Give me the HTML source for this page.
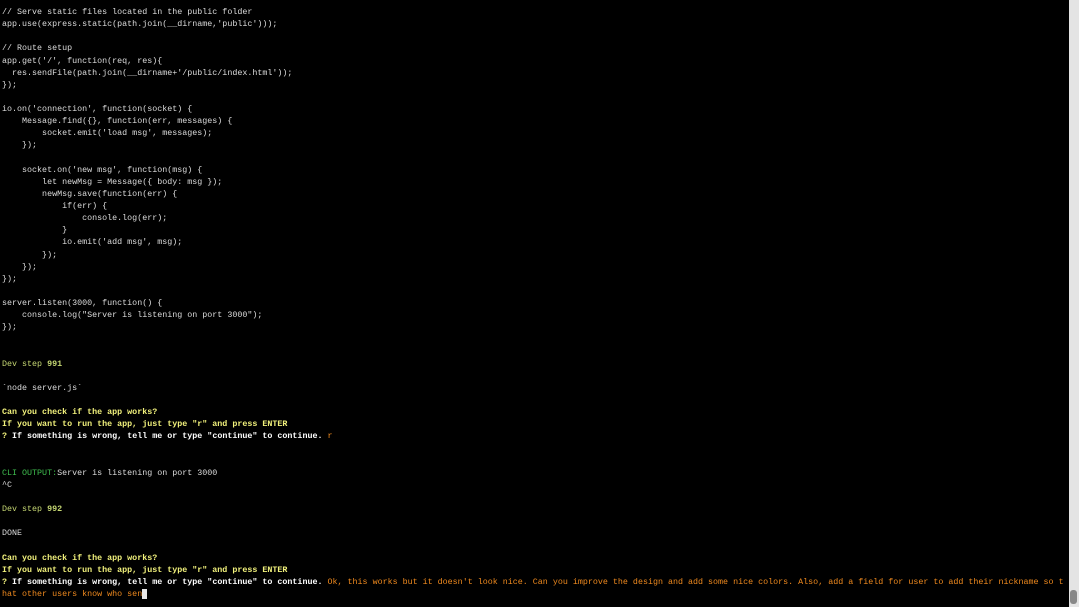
<!DOCTYPE html>
<html><head><meta charset="utf-8"><style>
html,body{margin:0;padding:0;}
body{width:1079px;height:607px;background:#000;overflow:hidden;position:relative;}
pre{position:absolute;left:2px;top:6px;margin:0;font-family:"Liberation Mono",monospace;font-size:8.35px;line-height:12.12px;color:#dcdcdc;white-space:pre;}
.sb{position:absolute;left:1069px;top:0;width:10px;height:607px;background:#e4e4e4;}
.th{position:absolute;left:1070px;top:590px;width:7px;height:14px;background:#888;border-radius:3px;}
.g{color:#c6d873}.y{color:#f2f27c;font-weight:bold}.w{color:#fff;font-weight:bold}.o{color:#f08a1e}.c{color:#3fbf4f}
.cur{background:#e8e8e8;color:#000}
</style></head><body>
<pre>// Serve static files located in the public folder
app.use(express.static(path.join(__dirname,'public')));

// Route setup
app.get('/', function(req, res){
  res.sendFile(path.join(__dirname+'/public/index.html'));
});

io.on('connection', function(socket) {
    Message.find({}, function(err, messages) {
        socket.emit('load msg', messages);
    });

    socket.on('new msg', function(msg) {
        let newMsg = Message({ body: msg });
        newMsg.save(function(err) {
            if(err) {
                console.log(err);
            }
            io.emit('add msg', msg);
        });
    });
});

server.listen(3000, function() {
    console.log("Server is listening on port 3000");
});


<span class="g">Dev step <b>991</b></span>

`node server.js`

<span class="y">Can you check if the app works?</span>
<span class="y">If you want to run the app, just type "r" and press ENTER</span>
<span class="y">?</span> <span class="w">If something is wrong, tell me or type "continue" to continue.</span> <span class="o">r</span>


<span class="c">CLI OUTPUT:</span>Server is listening on port 3000
^C

<span class="g">Dev step <b>992</b></span>

DONE

<span class="y">Can you check if the app works?</span>
<span class="y">If you want to run the app, just type "r" and press ENTER</span>
<span class="y">?</span> <span class="w">If something is wrong, tell me or type "continue" to continue.</span> <span class="o">Ok, this works but it doesn't look nice. Can you improve the design and add some nice colors. Also, add a field for user to add their nickname so t</span>
<span class="o">hat other users know who sen</span><span class="cur"> </span></pre>
<div class="sb"></div><div class="th"></div>
</body></html>
